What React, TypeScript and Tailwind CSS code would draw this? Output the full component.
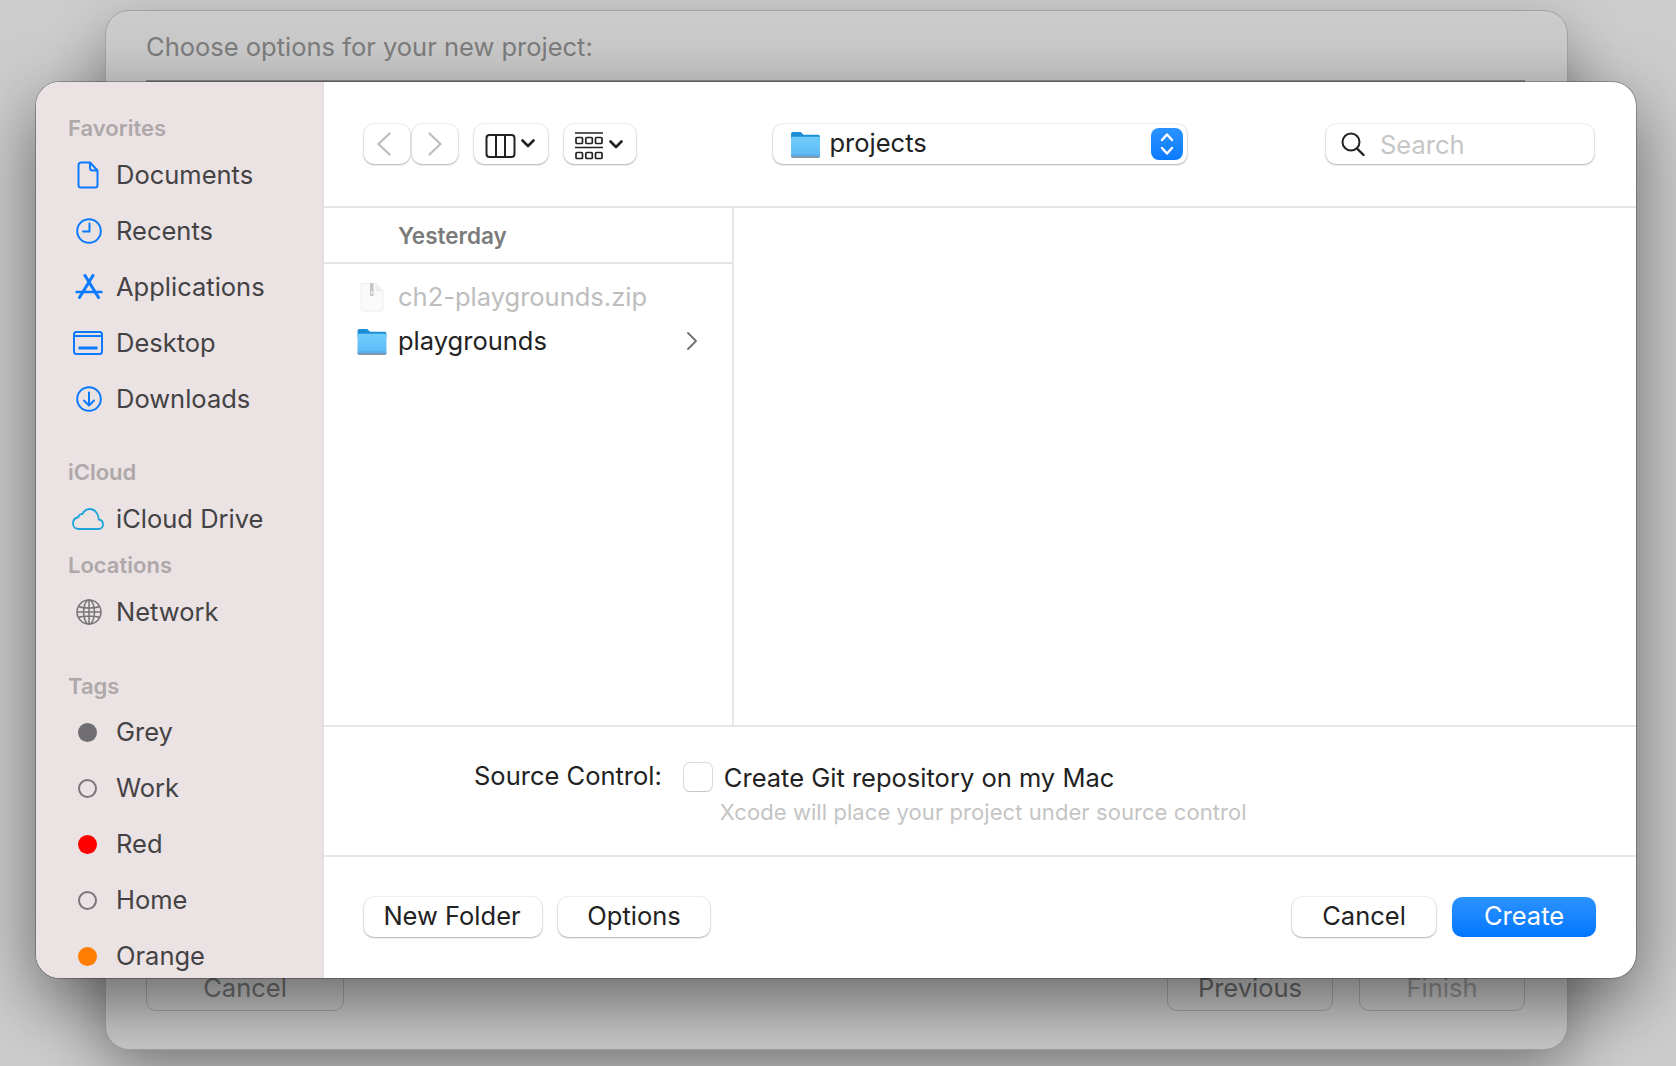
import React from 'react';

const Folder = ({ className }: { className: string }) => (
  <svg viewBox="0 0 30 28" className={className}>
    <defs>
      <linearGradient id="folderBody" x1="0" y1="0" x2="0" y2="1">
        <stop offset="0" stopColor="#72cdfc" />
        <stop offset="1" stopColor="#5bb8f6" />
      </linearGradient>
    </defs>
    <path d="M0 3a2 2 0 0 1 2-2h8l3 3h15a2 2 0 0 1 2 2v4H0z" fill="#1b8ed6" />
    <rect x="0" y="6" width="30" height="21" rx="1.5" fill="url(#folderBody)" />
    <rect x="0" y="24.5" width="30" height="1" fill="#4ea6e2" />
    <path d="M0 26h30v.5a1.5 1.5 0 0 1-1.5 1.5h-27A1.500 1.500 0 0 1 0 26.500z" fill="#7f99ad" />
  </svg>
);

const ZipFile = () => (
  <svg viewBox="0 0 24 30" className="h-[30px] w-[24px]">
    <path d="M1 1.500h15l7 7v19a1.500 1.500 0 0 1-1.500 1.500h-19A1.500 1.500 0 0 1 1 27.500z" fill="#fafafa" stroke="#eeeeee" />
    <path d="M16 1.500v7h7" fill="#f0f0f0" stroke="#e8e8e8" />
    <rect x="10" y="1" width="3.500" height="13" rx="1" fill="#c4c4c4" />
    <rect x="11" y="9" width="1.500" height="3" fill="#f5f5f5" />
  </svg>
);

const blue = '#0a7aff';

const DocumentsIcon = () => (
  <svg viewBox="0 0 22 28" className="h-[28px] w-[22px]" fill="none" stroke={blue} strokeWidth="2" strokeLinejoin="round">
    <path d="M4 1.500h9l7.500 8V24a2.500 2.500 0 0 1-2.500 2.500H4A2.500 2.500 0 0 1 1.500 24V4A2.500 2.500 0 0 1 4 1.500z" />
    <path d="M13 1.500V7a2.500 2.500 0 0 0 2.500 2.500h5" />
  </svg>
);

const RecentsIcon = () => (
  <svg viewBox="0 0 26 26" className="ml-[1px] h-[26px] w-[26px]" fill="none" stroke={blue} strokeWidth="2">
    <circle cx="13" cy="13" r="11.800" />
    <path d="M13.500 5.500v8H7" strokeLinecap="round" />
  </svg>
);

const ApplicationsIcon = () => (
  <svg viewBox="0 0 28 26" className="ml-[1px] h-[26px] w-[28px]" fill="none" stroke={blue} strokeWidth="3" strokeLinecap="round">
    <path d="M10 1.500l13.500 22" />
    <path d="M18 1.500L4.500 23.500" />
    <path d="M1.500 18h25" strokeWidth="2.400" />
  </svg>
);

const DesktopIcon = () => (
  <svg viewBox="0 0 30 24" className="h-[24px] w-[30px]" fill="none" stroke={blue} strokeWidth="2">
    <rect x="1" y="1" width="28" height="22" rx="2.500" />
    <path d="M1 5h28" />
    <rect x="5.500" y="15.500" width="19" height="3" fill={blue} stroke="none" />
  </svg>
);

const DownloadsIcon = () => (
  <svg viewBox="0 0 26 26" className="ml-[1px] h-[26px] w-[26px]" fill="none" stroke={blue} strokeWidth="2" strokeLinecap="round" strokeLinejoin="round">
    <circle cx="13" cy="13" r="11.800" />
    <path d="M13 6.500v12.500M8 14.500l5 5 5-5" />
  </svg>
);

const CloudIcon = () => (
  <svg viewBox="0 0 32 22" className="h-[22px] w-[32px]" fill="none" stroke="#1ea3dc" strokeWidth="1.800" strokeLinejoin="round">
    <path d="M7 21h19.500a4.500 4.500 0 0 0 4.500-4.500 5 5 0 0 0-4.200-5C26.500 5.500 22.500 1 18 1c-3.500 0-6.200 2-7.700 5.200C9 5.800 7 6.500 6.500 9 3 9.800 1 12.500 1 15.500 1 18.800 3.500 21 7 21z" />
  </svg>
);

const NetworkIcon = () => (
  <svg viewBox="0 0 26 26" className="ml-[1px] h-[26px] w-[26px]" fill="none" stroke="#77757a" strokeWidth="1.500">
    <circle cx="13" cy="13" r="12" />
    <ellipse cx="13" cy="13" rx="5.500" ry="12" />
    <path d="M13 1v24M2.500 7.500c5 2 16 2 21 0M1 13h24M2.500 18.500c5-2 16-2 21 0" />
  </svg>
);

const SectionHeader = ({ label, className }: { label: string; className: string }) => (
  <div className={`flex h-[34px] items-center pl-[32px] text-[22px] font-semibold text-[#aea8a9] ${className}`}>{label}</div>
);

const SidebarRow = ({ icon, label }: { icon: React.ReactNode; label: string }) => (
  <div className="flex h-[56px] shrink-0 items-center gap-[12px] pl-[36px] text-[25.500px] text-[#444244]">
    <span className="flex w-[32px] shrink-0 items-center justify-center">{icon}</span>
    <span>{label}</span>
  </div>
);

const FAVORITES = [
  { label: 'Documents', icon: <DocumentsIcon /> },
  { label: 'Recents', icon: <RecentsIcon /> },
  { label: 'Applications', icon: <ApplicationsIcon /> },
  { label: 'Desktop', icon: <DesktopIcon /> },
  { label: 'Downloads', icon: <DownloadsIcon /> },
];

const TAGS = [
  { label: 'Grey', dot: 'bg-[#6f6c72]' },
  { label: 'Work', dot: 'border-2 border-[#7b787b]' },
  { label: 'Red', dot: 'bg-[#ff0000]' },
  { label: 'Home', dot: 'border-2 border-[#7b787b]' },
  { label: 'Orange', dot: 'bg-[#ff7d00]' },
];

const Sidebar = () => (
  <div className="flex h-full w-[288px] shrink-0 flex-col overflow-hidden border-r-2 border-[#e3dfdf] bg-[#eae2e3] pt-[29px]">
    <SectionHeader label="Favorites" className="mb-[2px] shrink-0" />
    {FAVORITES.map((item) => (
      <SidebarRow key={item.label} icon={item.icon} label={item.label} />
    ))}
    <SectionHeader label="iCloud" className="mb-[2px] mt-[28px] shrink-0" />
    <SidebarRow icon={<CloudIcon />} label="iCloud Drive" />
    <SectionHeader label="Locations" className="mb-[2px] mt-[1px] shrink-0" />
    <SidebarRow icon={<NetworkIcon />} label="Network" />
    <SectionHeader label="Tags" className="mb-[1px] mt-[29px] shrink-0" />
    {TAGS.map((tag) => (
      <SidebarRow key={tag.label} icon={<span className={`mr-[2px] block h-[19px] w-[19px] rounded-full ${tag.dot}`} />} label={tag.label} />
    ))}
  </div>
);

const toolButton = 'flex h-[40px] items-center justify-center rounded-[10px] bg-white shadow-[0_1px_2px_rgba(0,0,0,0.28),0_0_0_1px_rgba(0,0,0,0.05)]';

const Toolbar = () => (
  <div className="flex h-[124px] shrink-0 items-center justify-between pl-[40px] pr-[42px]">
    <div className="flex items-center">
      <button className={`${toolButton} w-[46px] pr-[6px]`}>
        <svg viewBox="0 0 14 24" className="h-[24px] w-[14px]" fill="none" stroke="#bcbcbc" strokeWidth="2.200" strokeLinecap="round" strokeLinejoin="round">
          <path d="M12.500 1.500L1.500 12l11 10.500" />
        </svg>
      </button>
      <button className={`${toolButton} ml-[2px] w-[46px]`}>
        <svg viewBox="0 0 14 24" className="h-[24px] w-[14px]" fill="none" stroke="#bcbcbc" strokeWidth="2.200" strokeLinecap="round" strokeLinejoin="round">
          <path d="M1.500 1.500L12.500 12l-11 10.500" />
        </svg>
      </button>
      <button className={`${toolButton} ml-[16px] w-[74px] gap-[5px] pr-[3px]`}>
        <svg viewBox="0 0 30 24" className="mt-[3px] h-[24px] w-[31px]" fill="none" stroke="#222222" strokeWidth="2">
          <rect x="1" y="1" width="28" height="22" rx="3" />
          <path d="M10.500 1v22M19.500 1v22" />
        </svg>
        <svg viewBox="0 0 14 9" className="mb-[1px] h-[9px] w-[14px]" fill="none" stroke="#222222" strokeWidth="2.600" strokeLinecap="round" strokeLinejoin="round">
          <path d="M1.500 1.500L7 7l5.500-5.500" />
        </svg>
      </button>
      <button className={`${toolButton} ml-[16px] w-[72px] gap-[6px] pr-[2px]`}>
        <svg viewBox="0 0 28 28" className="mt-[3px] h-[28px] w-[28px]" fill="none" stroke="#222222" strokeWidth="1.700">
          <path d="M0 1h28M0 15.500h28" />
          <rect x="1" y="5.500" width="6.500" height="6" rx="1" />
          <rect x="10.800" y="5.500" width="6.500" height="6" rx="1" />
          <rect x="20.500" y="5.500" width="6.500" height="6" rx="1" />
          <rect x="1" y="20.500" width="6.500" height="6" rx="1" />
          <rect x="10.800" y="20.500" width="6.500" height="6" rx="1" />
          <rect x="20.500" y="20.500" width="6.500" height="6" rx="1" />
        </svg>
        <svg viewBox="0 0 14 9" className="mt-[1px] h-[9px] w-[14px]" fill="none" stroke="#222222" strokeWidth="2.600" strokeLinecap="round" strokeLinejoin="round">
          <path d="M1.500 1.500L7 7l5.500-5.500" />
        </svg>
      </button>
    </div>
    <div className={`${toolButton} mr-[3px] w-[414px] !justify-start pl-[18px] pr-[4px]`}>
      <Folder className="h-[27px] w-[29px] shrink-0" />
      <span className="mb-[2px] ml-[10px] text-[25.500px] text-[#222222]">projects</span>
      <span className="ml-auto flex h-[32px] w-[32px] items-center justify-center rounded-[8px] bg-gradient-to-b from-[#2a92ff] to-[#0a7aff]">
        <svg viewBox="0 0 14 24" className="h-[24px] w-[14px]" fill="none" stroke="#ffffff" strokeWidth="2.400" strokeLinecap="round" strokeLinejoin="round">
          <path d="M2 8l5-5.500L12 8M2 16l5 5.500 5-5.500" />
        </svg>
      </span>
    </div>
    <div className={`${toolButton} w-[268px] !justify-start pl-[15px]`}>
      <svg viewBox="0 0 24 24" className="h-[24px] w-[24px] shrink-0" fill="none" stroke="#222222" strokeWidth="2" strokeLinecap="round">
        <circle cx="10" cy="10" r="8.500" />
        <path d="M16 16.500l6.500 6.500" strokeWidth="2.400" />
      </svg>
      <span className="ml-[15px] mt-[2px] text-[25.500px] text-[#c6c6c6]">Search</span>
    </div>
  </div>
);

const FileBrowser = () => (
  <div className="flex h-[521px] shrink-0 border-y-2 border-[#e6e6e6]">
    <div className="w-[410px] shrink-0 border-r-2 border-[#e6e6e6]">
      <div className="flex h-[56px] items-center border-b-2 border-[#e6e6e6] pl-[74px] pt-[2px] text-[22.500px] font-semibold text-[#7b7b7b]">Yesterday</div>
      <div className="pt-[11px]">
        <div className="flex h-[44px] items-center pl-[36px] text-[25.500px] text-[#bdbdbd]">
          <ZipFile />
          <span className="ml-[14px]">ch2-playgrounds.zip</span>
        </div>
        <div className="flex h-[45px] items-center pl-[33px] pr-[35px] text-[25.500px] text-[#222222]">
          <Folder className="h-[27px] w-[30px] shrink-0" />
          <span className="ml-[11px]">playgrounds</span>
          <svg viewBox="0 0 10 18" className="ml-auto mb-[1px] h-[18px] w-[10px]" fill="none" stroke="#6f6f6f" strokeWidth="1.800" strokeLinecap="round" strokeLinejoin="round">
            <path d="M1 1l8 8-8 8" />
          </svg>
        </div>
      </div>
    </div>
  </div>
);

const SourceControl = () => (
  <div className="flex h-[128px] shrink-0 pl-[150px] pt-[30px]">
    <span className="mt-[3px] h-[32px] text-[25.500px] leading-[32px] text-[#222222]">Source Control:</span>
    <div className="ml-[22px]">
      <div className="flex items-center">
        <span className="h-[28px] w-[28px] rounded-[6px] bg-white shadow-[0_0_0_1px_rgba(0,0,0,0.14),0_1px_1px_rgba(0,0,0,0.1)]" />
        <span className="ml-[12px] mt-[2px] text-[25.500px] text-[#222222]">Create Git repository on my Mac</span>
      </div>
      <div className="ml-[36px] -mt-[1px] text-[22px] tracking-[0.07px] text-[#c4c4c4]">Xcode will place your project under source control</div>
    </div>
  </div>
);

const footerButton = 'flex items-center justify-center text-[25.500px]';

const Footer = () => (
  <div className="flex flex-1 items-center justify-between border-t-2 border-[#e6e6e6] pb-[2px] pl-[40px] pr-[40px]">
    <div className="flex gap-[16px]">
      <button className={`${toolButton} ${footerButton} w-[178px] pr-[2px] text-[#222222]`}>New Folder</button>
      <button className={`${toolButton} ${footerButton} w-[152px] text-[#222222]`}>Options</button>
    </div>
    <div className="flex gap-[16px]">
      <button className={`${toolButton} ${footerButton} w-[144px] text-[#222222]`}>Cancel</button>
      <button className={`${footerButton} h-[40px] w-[144px] rounded-[10px] bg-gradient-to-b from-[#2a92ff] to-[#0077ff] text-white`}>Create</button>
    </div>
  </div>
);

const backButton = 'flex h-[46px] items-center justify-center rounded-[10px] border border-[#a8a8a8] text-[25.500px]';

const BackWindow = () => (
  <div className="flex h-[1040px] w-[1463px] flex-col justify-between rounded-[24px] border border-[#a3a3a3] bg-[#cbcbcb] pb-[38px] pl-[40px] pr-[42px] shadow-[0_24px_60px_rgba(0,0,0,0.36)]">
    <div className="flex h-[71px] items-center border-b-2 border-[#8c8c8c] pt-[4px] text-[25.500px] text-[#7d7d7d]">Choose options for your new project:</div>
    <div className="flex items-end justify-between">
      <div className={`${backButton} w-[198px] text-[#737373]`}>Cancel</div>
      <div className="flex gap-[26px]">
        <div className={`${backButton} w-[166px] text-[#6b6b6b]`}>Previous</div>
        <div className={`${backButton} w-[166px] text-[#969696]`}>Finish</div>
      </div>
    </div>
  </div>
);

export default function App() {
  return (
    <div className="relative h-[1066px] w-[1676px] overflow-hidden bg-[#cdcdcd] pl-[105px] pt-[10px] font-['Inter',sans-serif]">
      <BackWindow />
      <div className="absolute left-[36px] top-[82px] flex h-[896px] w-[1600px] overflow-hidden rounded-[24px] bg-white shadow-[0_24px_70px_rgba(0,0,0,0.5),0_0_0_1px_rgba(0,0,0,0.25)]">
        <Sidebar />
        <div className="flex min-w-0 flex-1 flex-col">
          <Toolbar />
          <FileBrowser />
          <SourceControl />
          <Footer />
        </div>
      </div>
    </div>
  );
}
